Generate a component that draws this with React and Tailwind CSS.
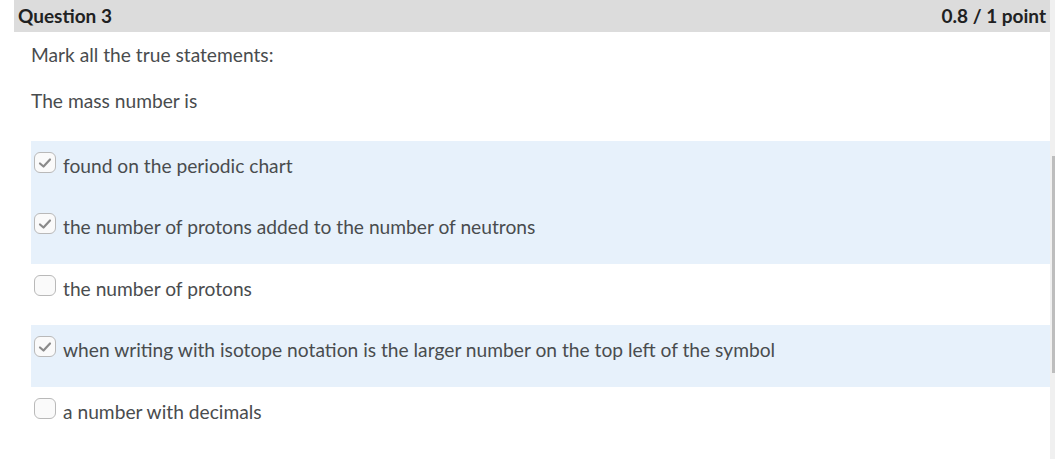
import React from "react";

const Check = ({ checked }) => (
  <span className="flex h-[21px] w-[22px] shrink-0 items-center justify-center rounded-[6px] border border-[#b9b9b9] bg-[#fafafa]">
    {checked && (
      <svg width="14" height="12" viewBox="0 0 14 12" fill="none">
        <path d="M2 6.5 L5.5 9.5 L12 2.5" stroke="#8a8a8a" strokeWidth="2.2" strokeLinecap="round" strokeLinejoin="round" />
      </svg>
    )}
  </span>
);

const rows = [
  { t: "found on the periodic chart", c: true, hl: true },
  { t: "the number of protons added to the number of neutrons", c: true, hl: true },
  { t: "the number of protons", c: false, hl: false },
  { t: "when writing with isotope notation is the larger number on the top left of the symbol", c: true, hl: true },
  { t: "a number with decimals", c: false, hl: false },
];

export default function App() {
  return (
    <div className="flex h-[459px] w-[1055px] overflow-hidden bg-white text-[#494c4e]" style={{ fontFamily: "Lato, 'Noto Sans', sans-serif" }}>
      <div className="w-[14px] shrink-0" />
      <div className="flex min-w-0 flex-1 flex-col">
        <div className="flex h-[32px] items-center justify-between bg-[#dcdcdc] pl-[4px] pr-[4px] text-[19px] font-bold text-[#202122]">
          <span>Question 3</span>
          <span>0.8 / 1 point</span>
        </div>
        <div className="pl-[17px]">
          <div className="pt-[11px] text-[19.2px] leading-[24px]">Mark all the true statements:</div>
          <div className="pt-[22px] text-[19.2px] leading-[24px]">The mass number is</div>
          <div className="mt-[28px] flex flex-col">
            {rows.map((r, i) => (
              <div key={i} className={`h-[61.4px] pl-[3px] pt-[11px] text-[19.2px] ${r.hl ? "bg-[#e7f1fb]" : ""}`}>
                <div className="flex items-start gap-[7px]">
                  <Check checked={r.c} />
                  <span className="mt-[2px] leading-[24px]">{r.t}</span>
                </div>
              </div>
            ))}
          </div>
        </div>
      </div>
      <div className="relative w-[5px] shrink-0 bg-[#f0f0f0]">
        <div className="absolute left-[2px] top-[156px] h-[217px] w-[3px] bg-[#bdbdbd]" />
      </div>
    </div>
  );
}
